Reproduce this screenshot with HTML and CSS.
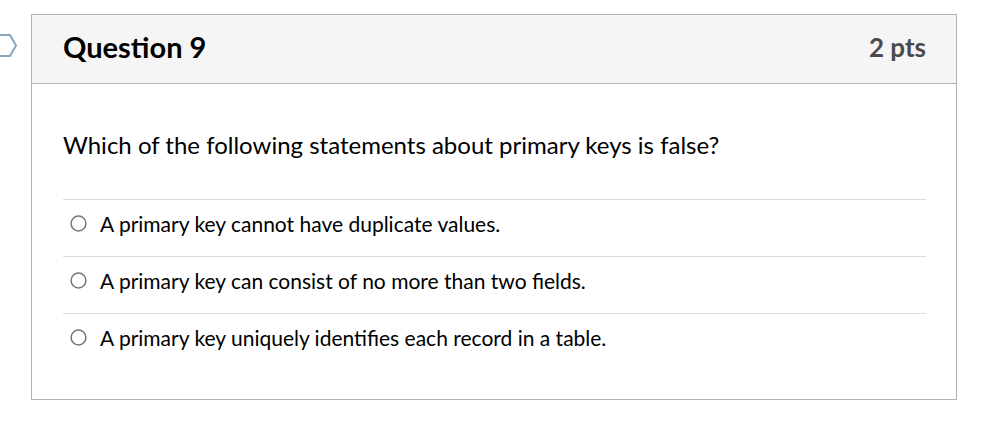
FILE: index.html
```html
<!DOCTYPE html>
<html>
<head>
<meta charset="utf-8">
<link rel="stylesheet" href="styles.css">
</head>
<body>
<div class="page">
  <svg class="flag" width="20" height="28" viewBox="0 0 20 28">
    <path d="M-4 2 H10 L16 12.5 L10 23 H-4 Z" fill="none" stroke="#8aa4ba" stroke-width="2" stroke-linejoin="miter"/>
  </svg>
  <div class="card">
    <div class="card-header">
      <h2 class="title">Question 9</h2>
      <div class="pts">2 pts</div>
    </div>
    <div class="card-body">
      <p class="question">Which of the following statements about primary keys is false?</p>
      <div class="answers">
        <label class="answer"><svg class="radio" width="17" height="17" viewBox="0 0 17 17"><circle cx="8.5" cy="8.5" r="7.4" fill="#fff" stroke="#767676" stroke-width="1.5"/></svg><span>A primary key cannot have duplicate values.</span></label>
        <label class="answer"><svg class="radio" width="17" height="17" viewBox="0 0 17 17"><circle cx="8.5" cy="8.5" r="7.4" fill="#fff" stroke="#767676" stroke-width="1.5"/></svg><span>A primary key can consist of no more than two fields.</span></label>
        <label class="answer"><svg class="radio" width="17" height="17" viewBox="0 0 17 17"><circle cx="8.5" cy="8.5" r="7.4" fill="#fff" stroke="#767676" stroke-width="1.5"/></svg><span>A primary key uniquely identifies each record in a table.</span></label>
      </div>
    </div>
  </div>
</div>
</body>
</html>
```
FILE: styles.css
```css
html, body {
  margin: 0;
  padding: 0;
  background: #ffffff;
}
body {
  font-family: Lato, "Noto Sans", sans-serif;
  color: #000;
}
.page {
  position: relative;
  padding: 14px 0 0 31px;
}
.flag {
  position: absolute;
  left: 0;
  top: 33px;
}
.card {
  width: 924px;
  border: 1px solid #b4b4b4;
}
.card-header {
  height: 63px;
  background: #f5f5f5;
  border-bottom: 1px solid #b4b4b4;
  display: flex;
  align-items: center;
  justify-content: space-between;
  padding: 0 30px 5px 31px;
}
.title {
  margin: 0;
  font-size: 29px;
  font-weight: 700;
}
.pts {
  font-size: 26px;
  font-weight: 700;
  color: #4a4a4a;
}
.card-body {
  padding: 46px 30px 29px 31px;
}
.question {
  margin: 0 0 39px 0;
  font-size: 24px;
  line-height: 30px;
}
.answer {
  display: flex;
  align-items: center;
  gap: 13px;
  height: 46px;
  padding-bottom: 10px;
  border-top: 1px solid #dddddd;
  padding-left: 7px;
  font-size: 21px;
}
.radio {
  flex: none;
  display: block;
}
```
